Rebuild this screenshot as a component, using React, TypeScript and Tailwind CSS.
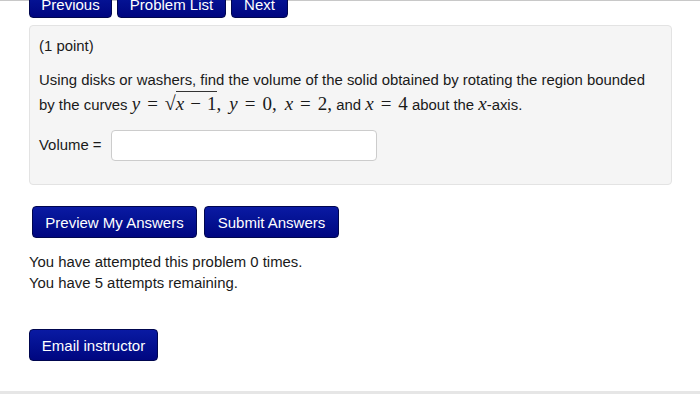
import React from 'react';

const btn =
  'whitespace-nowrap rounded-[4px] border border-[#00064f] bg-gradient-to-b from-[#0a1aa3] to-[#000680] text-white text-[15px] leading-none px-0';

function M({ children }: { children: React.ReactNode }) {
  return <span className="font-['Liberation_Serif','DejaVu_Serif',serif] text-[19px]">{children}</span>;
}

function I({ children }: { children: React.ReactNode }) {
  return <i className="italic">{children}</i>;
}

function Eq() {
  return <span className="mx-[7px]">=</span>;
}

function Sep() {
  return <span className="mr-[8px]">,</span>;
}

export default function App() {
  return (
    <div className="relative w-[700px] h-[394px] overflow-hidden bg-white font-['Liberation_Sans',Arial,sans-serif] text-[14.9px] text-[#1a1a1a]">
      <div className="border-t border-[#c8c8c8]" />
      <div className="flex gap-[5px] pl-[29px] -mt-[16px]">
        <button className={`${btn} h-[33px] w-[83px] pt-[5px]`}>Previous</button>
        <button className={`${btn} h-[33px] w-[109px] pt-[5px]`}>Problem List</button>
        <button className={`${btn} h-[33px] w-[57px] pt-[5px]`}>Next</button>
      </div>

      <div className="ml-[29px] mt-[7px] w-[643px] h-[160px] rounded-[4px] border border-[#e3e3e3] bg-[#f5f5f5] px-[9px] pt-[10px]">
        <div className="leading-[20px]">(1 point)</div>
        <div className="mt-[13px] leading-[23px]">
          Using disks or washers, find the volume of the solid obtained by rotating the region bounded
          <br />
          by the curves{' '}
          <M>
            <I>y</I>
            <Eq />
            <span className="inline-block">
              <span className="text-[20px]">√</span>
              <span className="border-t border-[#333] pt-[1px]">
                <I>x</I>
                <span className="mx-[6px]">−</span>1
              </span>
            </span>
            <Sep />
            <I>y</I>
            <Eq />0<Sep />
            <I>x</I>
            <Eq />2,
          </M>{' '}
          and{' '}
          <M>
            <I>x</I>
            <Eq />4
          </M>{' '}
          about the{' '}
          <M>
            <I>x</I>
          </M>
          -axis.
        </div>
        <div className="mt-[13px] flex items-center gap-[9px]">
          <span>Volume =</span>
          <div className="h-[31px] w-[266px] rounded-[4px] border border-[#cccccc] bg-white" />
        </div>
      </div>

      <div className="flex gap-[7px] pl-[32px] mt-[21px]">
        <button className={`${btn} h-[32px] w-[165px]`}>Preview My Answers</button>
        <button className={`${btn} h-[32px] w-[135px]`}>Submit Answers</button>
      </div>

      <div className="pl-[29px] mt-[14px] leading-[21px]">
        <div>You have attempted this problem 0 times.</div>
        <div>You have 5 attempts remaining.</div>
      </div>

      <div className="pl-[29px] mt-[35px]">
        <button className={`${btn} h-[32px] w-[129px]`}>Email instructor</button>
      </div>

      <div className="absolute left-0 right-0 bottom-0 h-[3px] bg-[#e6e6e6]" />
    </div>
  );
}
